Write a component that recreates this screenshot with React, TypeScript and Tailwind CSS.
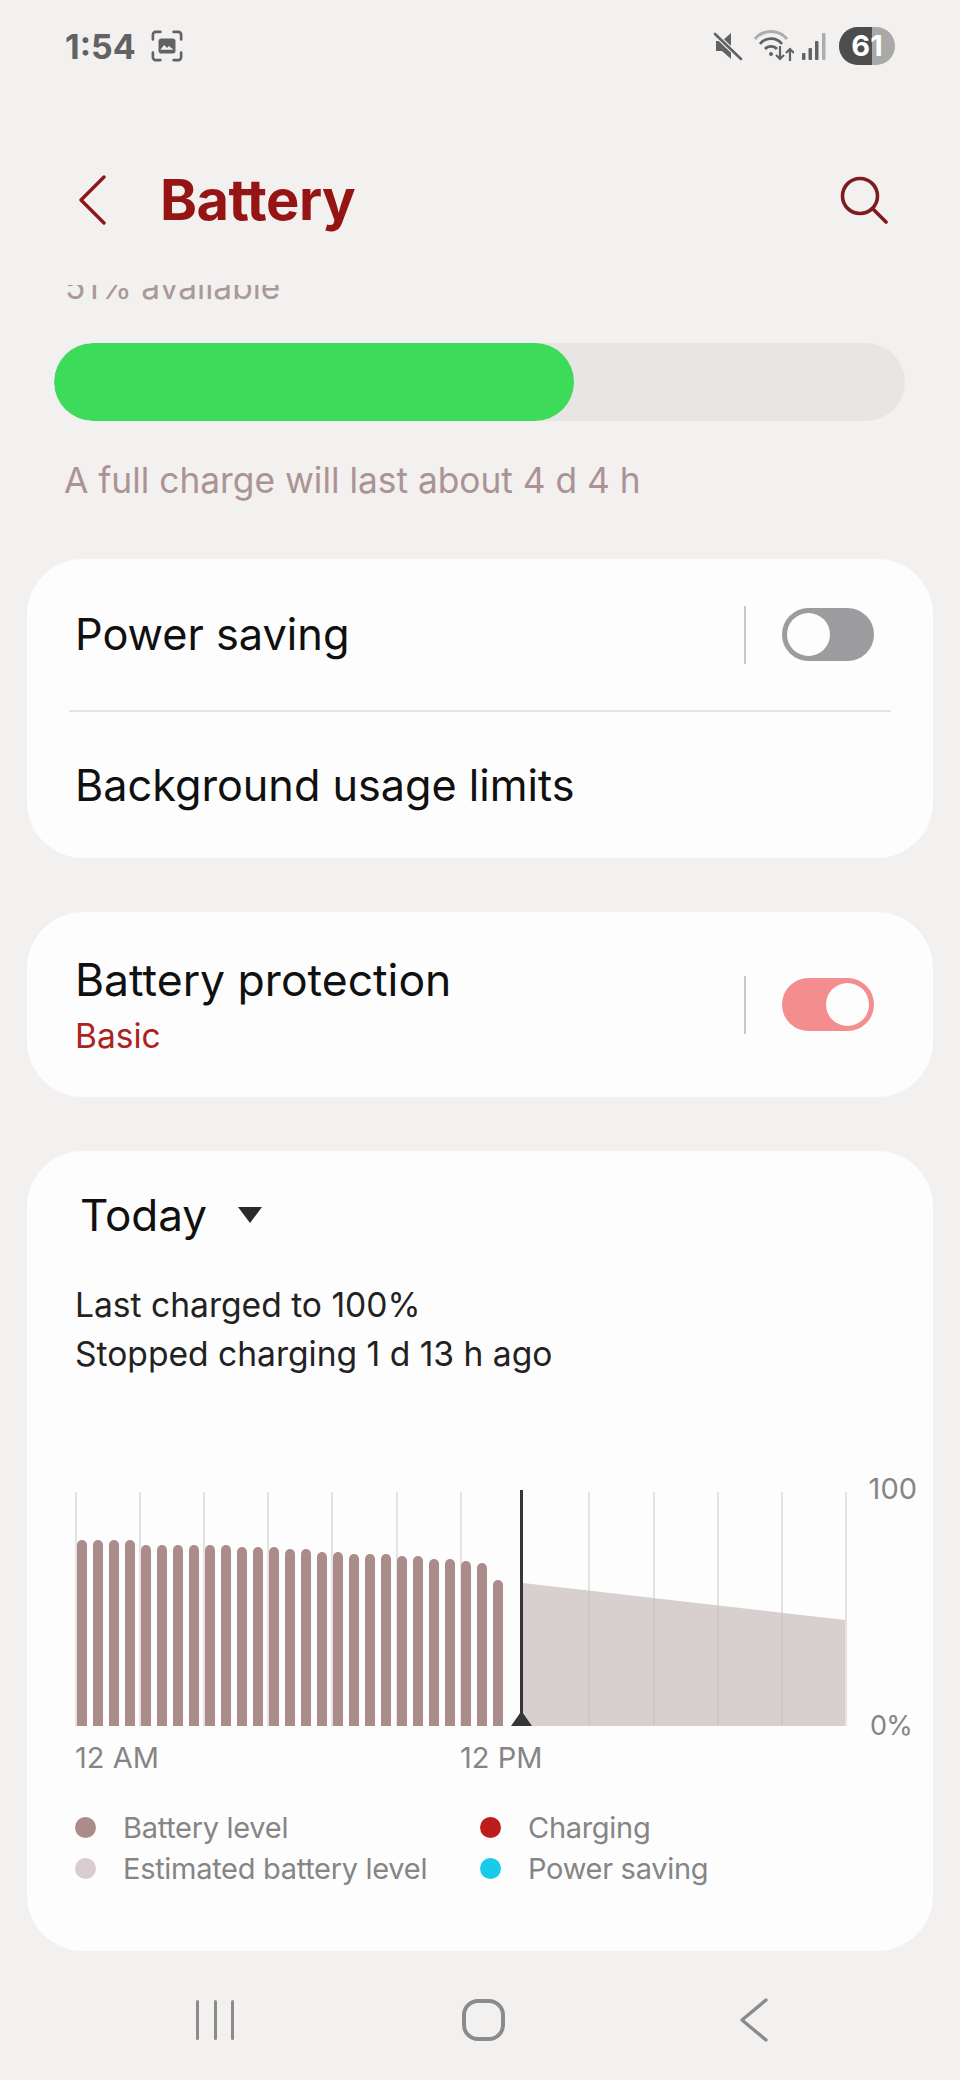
const BAR_TOPS = [240, 240, 240, 240, 254, 254, 254, 254, 254, 254, 261, 261, 261, 268, 268, 275, 275, 282, 282, 282, 289, 289, 296, 296, 303, 310, 359];
const GRID_LEFT = [75, 139, 203, 267, 331, 396, 460, 588, 653, 717, 781, 845];

function Toggle({ on }: { on: boolean }) {
  return (
    <div className={`flex h-[53px] w-[92px] items-center rounded-full px-[5px] ${on ? 'justify-end bg-[#f48d8d]' : 'justify-start bg-[#9c9c9f]'}`}>
      <div className="h-[43px] w-[43px] rounded-full bg-[#fdfdfd]" />
    </div>
  );
}

function LegendItem({ color, label }: { color: string; label: string }) {
  return (
    <div className="flex h-[41px] items-center">
      <div className={`h-[21px] w-[21px] rounded-full ${color}`} />
      <span className="ml-[27px] text-[29px] tracking-[-0.3px] text-[#858585]">{label}</span>
    </div>
  );
}

function StatusBar() {
  return (
    <div className="flex h-[92px] items-center justify-between pl-[65px] pr-[65px]">
      <div className="flex items-center">
        <span className="text-[34px] font-bold text-[#626262]">1:54</span>
        <svg className="ml-[15px]" width="32" height="32" viewBox="0 0 34 34" fill="none">
          <path d="M2 10V5a3 3 0 0 1 3-3h5M24 2h5a3 3 0 0 1 3 3v5M32 24v5a3 3 0 0 1-3 3h-5M10 32H5a3 3 0 0 1-3-3v-5" stroke="#626262" strokeWidth="2.8" strokeLinecap="round" />
          <rect x="8" y="9" width="18" height="16" rx="3" fill="#626262" />
          <path d="M10 21l4-5 3 3 2-2 5 4z" fill="#f3f0f0" />
        </svg>
      </div>
      <div className="flex items-center">
        <svg width="30" height="30" viewBox="0 0 30 30" fill="none">
          <path d="M3 10h6l9-8v26l-9-8H3z" fill="#626262" />
          <path d="M2 3l26 25" stroke="#f3f0f0" strokeWidth="5" />
          <path d="M2 3l26 25" stroke="#626262" strokeWidth="2.6" strokeLinecap="round" />
        </svg>
        <svg className="ml-[11px]" width="40" height="32" viewBox="0 0 40 32" fill="none">
          <path d="M1 9a21 21 0 0 1 32 0" stroke="#adadad" strokeWidth="3" />
          <path d="M6 14a14 14 0 0 1 22 0M11 19a8 8 0 0 1 12 0" stroke="#626262" strokeWidth="2.8" />
          <circle cx="17" cy="24" r="2" fill="#626262" />
          <path d="M26 16v13m-4-4l4 4 4-4M36 31V19m-4 4l4-4 4 4" stroke="#626262" strokeWidth="2.2" />
        </svg>
        <svg className="ml-[8px]" width="24" height="28" viewBox="0 0 24 28" fill="none">
          <rect x="0" y="21" width="3.5" height="7" rx="1" fill="#626262" />
          <rect x="6.5" y="16" width="3.5" height="12" rx="1" fill="#626262" />
          <rect x="13" y="9" width="3.5" height="19" rx="1" fill="#626262" />
          <rect x="20" y="1" width="3.5" height="27" rx="1" fill="#adadad" />
        </svg>
        <div className="relative ml-[13px] flex h-[38px] w-[56px] items-center justify-center overflow-hidden rounded-full bg-[#a9a9a9]">
          <div className="absolute inset-y-0 left-0 w-[33px] bg-[#4d4d4d]" />
          <span className="relative text-[29px] font-bold text-white">61</span>
        </div>
      </div>
    </div>
  );
}

function Header() {
  return (
    <div className="flex h-[193px] items-start justify-between pl-[78px] pr-[72px] pt-[83px]">
      <div className="flex items-center">
        <svg width="28" height="50" viewBox="0 0 28 50" fill="none">
          <path d="M26 2L3 25l23 23" stroke="#8f1616" strokeWidth="3.4" strokeLinecap="round" strokeLinejoin="round" />
        </svg>
        <span className="ml-[54px] text-[56px] leading-[50px] font-bold tracking-[-0.5px] text-[#951515]">Battery</span>
      </div>
      <svg className="mt-[1px]" width="48" height="48" viewBox="0 0 48 48" fill="none">
        <circle cx="20" cy="20" r="17.5" stroke="#7f1a1f" strokeWidth="3.6" />
        <path d="M33 33l13 13" stroke="#7f1a1f" strokeWidth="3.6" strokeLinecap="round" />
      </svg>
    </div>
  );
}

function BatteryChart() {
  return (
    <div className="relative mt-[72px] h-[280px]">
      {/* gridlines sit behind the bars, measured from the card's left edge at 27px */}
      {GRID_LEFT.map((x) => (
        <div key={x} className="absolute top-[42px] bottom-[4px] w-[2px] bg-[#e4e2e3]" style={{ left: x - 27 }} />
      ))}
      <svg className="absolute top-[42px] left-[496px]" width="322" height="234" viewBox="0 0 322 234">
        <path d="M0 91L322 128V234H0z" fill="#c9bcbc" fillOpacity="0.72" />
      </svg>
      <div className="absolute bottom-[4px] left-[50px] flex items-end gap-[6px]">
        {BAR_TOPS.map((top, i) => (
          <div key={i} className="w-[10px] rounded-t-full bg-[#aa8c8a]" style={{ height: (798 - top) / 3 }} />
        ))}
      </div>
      <div className="absolute top-[40px] bottom-[4px] left-[493px] w-[3px] bg-[#363636]" />
      <svg className="absolute bottom-[4px] left-[484px]" width="21" height="15" viewBox="0 0 21 15">
        <path d="M10.5 0L21 15H0z" fill="#363636" />
      </svg>
      <span className="absolute top-[24px] right-[16px] text-[29px] leading-none text-[#858585]">100</span>
      <span className="absolute bottom-[-9px] right-[21px] text-[27px] leading-none tracking-[-0.8px] text-[#858585]">0%</span>
    </div>
  );
}

export default function App() {
  return (
    <div className="flex h-[2080px] w-[960px] flex-col overflow-hidden bg-[#f3f0f0] font-['Inter','Noto_Sans',sans-serif]">
      <StatusBar />
      <Header />
      <div className="relative h-[20px] overflow-hidden">
        <div className="absolute -top-[20px] left-[65px] text-[33.5px] leading-[44px] text-[#a99a9a]">51% available</div>
      </div>
      <div className="ml-[54px] mt-[38px] h-[78px] w-[851px] overflow-hidden rounded-full bg-[#e7e6e5]">
        <div className="h-full w-[520px] rounded-full bg-[#3cdb5a]" />
      </div>
      <p className="ml-[64px] mt-[39px] text-[35.3px] leading-[42px] text-[#ac9393]">A full charge will last about 4 d 4 h</p>

      <div className="mx-[27px] mt-[57px] h-[299px] rounded-[56px] bg-[#fdfdfd]">
        <div className="flex h-[151px] items-center pl-[48px] pr-[59px]">
          <span className="flex-1 text-[43.3px] text-[#101010]">Power saving</span>
          <div className="mr-[36px] h-[58px] w-[2px] bg-[#c8c8c8]" />
          <Toggle on={false} />
        </div>
        <div className="mx-[42px] h-[2px] bg-[#e4e4e4]" />
        <div className="flex h-[146px] items-center pl-[48px]">
          <span className="text-[43.2px] text-[#101010]">Background usage limits</span>
        </div>
      </div>

      <div className="mx-[27px] mt-[54px] flex h-[185px] items-center rounded-[56px] bg-[#fdfdfd] pl-[48px] pr-[59px]">
        <div className="flex-1">
          <div className="text-[44.5px] leading-[50px] text-[#101010]">Battery protection</div>
          <div className="mt-[12px] text-[33.5px] leading-[38px] text-[#ab2222]">Basic</div>
        </div>
        <div className="mr-[36px] h-[58px] w-[2px] bg-[#c8c8c8]" />
        <Toggle on />
      </div>

      <div className="mx-[27px] mt-[54px] h-[800px] rounded-[56px] bg-[#fdfdfd] pl-[48px]">
        <div className="flex items-center pl-[5px] pt-[39px]">
          <span className="text-[44px] leading-[50px] text-[#101010]">Today</span>
          <svg className="ml-[29px]" width="28" height="18" viewBox="0 0 28 18">
            <path d="M2 1h24L14 17z" fill="#2b2b2b" strokeLinejoin="round" />
          </svg>
        </div>
        <div className="mt-[40px] text-[33.6px] leading-[49px] text-[#222222]">
          <div>Last charged to 100%</div>
          <div>Stopped charging 1 d 13 h ago</div>
        </div>
        <div className="-ml-[48px]">
          <BatteryChart />
        </div>
        <div className="mt-[13px] flex text-[29px] leading-none text-[#858585]">
          <span className="w-[385px]">12 AM</span>
          <span>12 PM</span>
        </div>
        <div className="mt-[35px] grid grid-cols-[405px_1fr]">
          <LegendItem color="bg-[#aa8c8a]" label="Battery level" />
          <LegendItem color="bg-[#bd1c1c]" label="Charging" />
          <LegendItem color="bg-[#d9cdd0]" label="Estimated battery level" />
          <LegendItem color="bg-[#18cbe8]" label="Power saving" />
        </div>
      </div>

      <div className="flex flex-1 items-center pt-[8px]">
        <div className="ml-[196px] flex h-[40px] w-[38px] justify-between">
          <div className="w-[3px] rounded-full bg-[#8b8b8b]" />
          <div className="w-[3px] rounded-full bg-[#8b8b8b]" />
          <div className="w-[3px] rounded-full bg-[#8b8b8b]" />
        </div>
        <div className="ml-[228px] h-[42px] w-[43px] rounded-[16px] border-[4px] border-[#8b8b8b]" />
        <svg className="ml-[234px]" width="30" height="44" viewBox="0 0 30 44" fill="none">
          <path d="M27 2L3 22l24 20" stroke="#8b8b8b" strokeWidth="3.4" strokeLinecap="round" strokeLinejoin="round" />
        </svg>
      </div>
    </div>
  );
}
